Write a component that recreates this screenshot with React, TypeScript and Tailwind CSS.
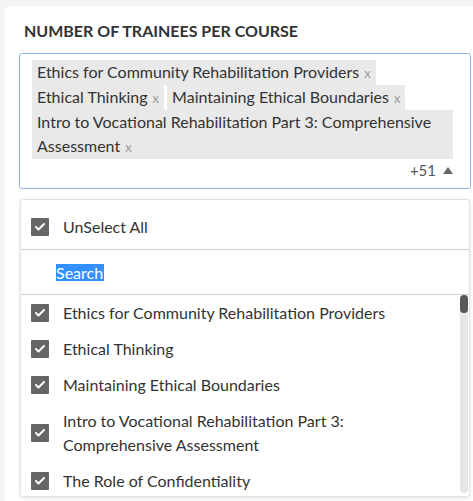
import { Check } from "lucide-react";

const selectedTags = [
  "Ethics for Community Rehabilitation Providers",
  "Ethical Thinking",
  "Maintaining Ethical Boundaries",
  "Intro to Vocational Rehabilitation Part 3: Comprehensive Assessment",
];

const courses = [
  "Ethics for Community Rehabilitation Providers",
  "Ethical Thinking",
  "Maintaining Ethical Boundaries",
  "Intro to Vocational Rehabilitation Part 3: Comprehensive Assessment",
  "The Role of Confidentiality",
  "Vocational Evaluation Basics",
];

function Checkbox() {
  return (
    <span className="flex h-[18px] w-[18px] shrink-0 items-center justify-center rounded-[1px] bg-[#666666]">
      <Check className="h-[12px] w-[12px] text-white" strokeWidth={4} />
    </span>
  );
}

export default function App() {
  return (
    <div className="h-[501px] overflow-hidden bg-[#f4f4f4] pl-[5px] pt-[6px] font-[Lato,sans-serif] text-[#333333]">
      <div className="h-[520px] rounded-tl-[6px] bg-white pl-[14px] pr-[2px] pt-[15px]">
        <h2 className="pl-[5px] text-[16px] leading-[20px] font-bold">NUMBER OF TRAINEES PER COURSE</h2>

        <div className="mt-[12px] rounded-[3px] border border-[#8fb5e6] pb-[7px] pl-[12px] pr-[14px] pt-[6px] text-[16px] leading-[24px]">
          <div>
            {selectedTags.map((tag) => (
              <span key={tag} className="mr-[3px] inline-block bg-[#e9e9e9] pl-[5px] pr-[5px] align-top">
                {tag}
                <span className="ml-[5px] text-[13px] text-[#9a9a9a]">x</span>
              </span>
            ))}
          </div>
          <div className="flex h-[22px] items-center justify-end gap-[7px] pr-[3px] text-[15px] text-[#555555]">
            <span>+51</span>
            <svg width="10" height="7" viewBox="0 0 10 7">
              <path d="M5 0 L10 7 L0 7 Z" fill="#666666" />
            </svg>
          </div>
        </div>

        <div className="ml-[1px] mr-[1px] mt-[10px] h-[298px] overflow-hidden rounded-[3px] border border-[#e2e2e2] bg-white shadow-[0_1px_4px_rgba(0,0,0,0.12)]">
          <div className="flex h-[49px] items-center gap-[14px] pl-[10px] pt-[4px] text-[16px]">
            <Checkbox />
            <span>UnSelect All</span>
          </div>
          <div className="flex h-[45px] items-center border-t border-[#d0d0d0] pl-[35px]">
            <span className="bg-[#3390ff] pr-[1px] text-[16px] leading-[17px] text-white">Search</span>
          </div>
          <div className="relative border-t border-[#d0d0d0]">
            <ul className="pr-[16px]">
              {courses.map((c) => (
                <li key={c} className="flex items-center gap-[14px] py-[6px] pl-[10px] text-[16px] leading-[24px]">
                  <Checkbox />
                  <span>{c}</span>
                </li>
              ))}
            </ul>
            <div className="absolute right-[1px] top-0 h-[198px] w-[8px] rounded-full bg-[#e6e6e6]">
              <div className="h-[18px] w-[8px] rounded-full bg-[#585858]" />
            </div>
          </div>
        </div>
      </div>
    </div>
  );
}
